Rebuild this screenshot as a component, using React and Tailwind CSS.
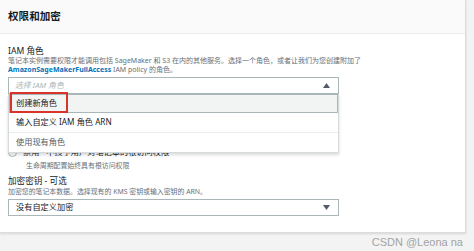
import React from 'react'

const font = "font-['Noto_Sans','Noto_Sans_CJK_SC',sans-serif]"

function Caret({ up }) {
  return (
    <svg width="7" height="5" viewBox="0 0 7 5" className="shrink-0">
      {up ? <path d="M3.5 0 L7 5 L0 5 Z" fill="#545b64" /> : <path d="M0 0 L7 0 L3.5 5 Z" fill="#545b64" />}
    </svg>
  )
}

export default function App() {
  return (
    <div className={`w-[474px] h-[251px] bg-[#f3f3f3] overflow-hidden ${font}`}>
      {/* Card */}
      <div className="w-[466px] h-[233px] bg-white border-r border-b border-[#dcdcdc] shadow-[0_1px_2px_rgba(0,0,0,0.12)] flex flex-col">
        {/* Header */}
        <div className="h-[34px] shrink-0 bg-[#fafafa] border-b border-[#eaeded] flex items-center px-2">
          <h2 className="text-[10.6px] font-bold text-[#16191f] leading-none">权限和加密</h2>
        </div>

        {/* Body */}
        <div className="px-2 pt-[12px] flex flex-col">
          <div className="text-[8.6px] leading-[10px] text-[#16191f]">IAM 角色</div>
          <div className="text-[7px] leading-[9px] text-[#687078]">
            笔记本实例需要权限才能调用包括 SageMaker 和 S3 在内的其他服务。选择一个角色，或者让我们为您创建附加了
            <br />
            <span className="font-bold text-[#0073bb]">AmazonSageMakerFullAccess</span> IAM policy 的角色。
          </div>

          {/* IAM select with open dropdown */}
          <div className="relative w-[331px] mt-[3px]">
            <div className="h-[17px] border border-[#aab7b8] flex items-center justify-between pl-[6px] pr-[8px]">
              <span className="text-[7.8px] italic text-[#aab7b8]">选择 IAM 角色</span>
              <Caret up />
            </div>

            <div className="absolute left-0 right-0 top-full z-10 bg-white border border-t-0 border-[#d5dbdb] shadow-[0_2px_3px_rgba(0,0,0,0.15)] flex flex-col">
              <div className="h-[19px] bg-[#f2f3f3] border border-[#aab7b8] flex items-center pl-[6px] text-[8.2px] text-[#16191f]">创建新角色</div>
              <div className="h-[20px] border-b border-[#eaeded] flex items-center pl-[7px] text-[8.2px] text-[#16191f]">输入自定义 IAM 角色 ARN</div>
              <div className="h-[19px] flex items-center pl-[7px] text-[8.2px] text-[#545b64]">使用现有角色</div>
            </div>

            {/* annotation box */}
            <div className="absolute left-[2px] top-[15px] w-[58px] h-[21px] border-2 border-[#d9342b] z-20" />
          </div>

          {/* space hidden behind the open list */}
          <div className="h-[53px]" />

          <div className="flex items-center gap-[6px] h-[10px]">
            <span className="w-[9px] h-[9px] rounded-full border border-[#aab7b8] shrink-0" />
            <span className="text-[8.2px] leading-[10px] text-[#16191f]">禁用 - 不授予用户对笔记本的根访问权限</span>
          </div>
          <div className="pl-[18px] mt-[4px] text-[6.9px] leading-[9px] text-[#687078]">生命周期配置始终具有根访问权限</div>

          <div className="mt-[6px] text-[8.6px] leading-[10px] text-[#16191f]">加密密钥 - 可选</div>
          <div className="text-[6.9px] leading-[9px] text-[#687078] mt-[1px]">加密您的笔记本数据。选择现有的 KMS 密钥或输入密钥的 ARN。</div>

          <div className="w-[331px] h-[17px] mt-[3px] border border-[#aab7b8] flex items-center justify-between pl-[7px] pr-[8px]">
            <span className="text-[8.2px] text-[#16191f]">没有自定义加密</span>
            <Caret />
          </div>
        </div>
      </div>

      {/* watermark */}
      <div className="h-[18px] flex items-center justify-end pr-[11px]">
        <span className="font-['Liberation_Sans',sans-serif] text-[11px] text-[#a3a3a3] leading-none">CSDN @Leona na</span>
      </div>
    </div>
  )
}
